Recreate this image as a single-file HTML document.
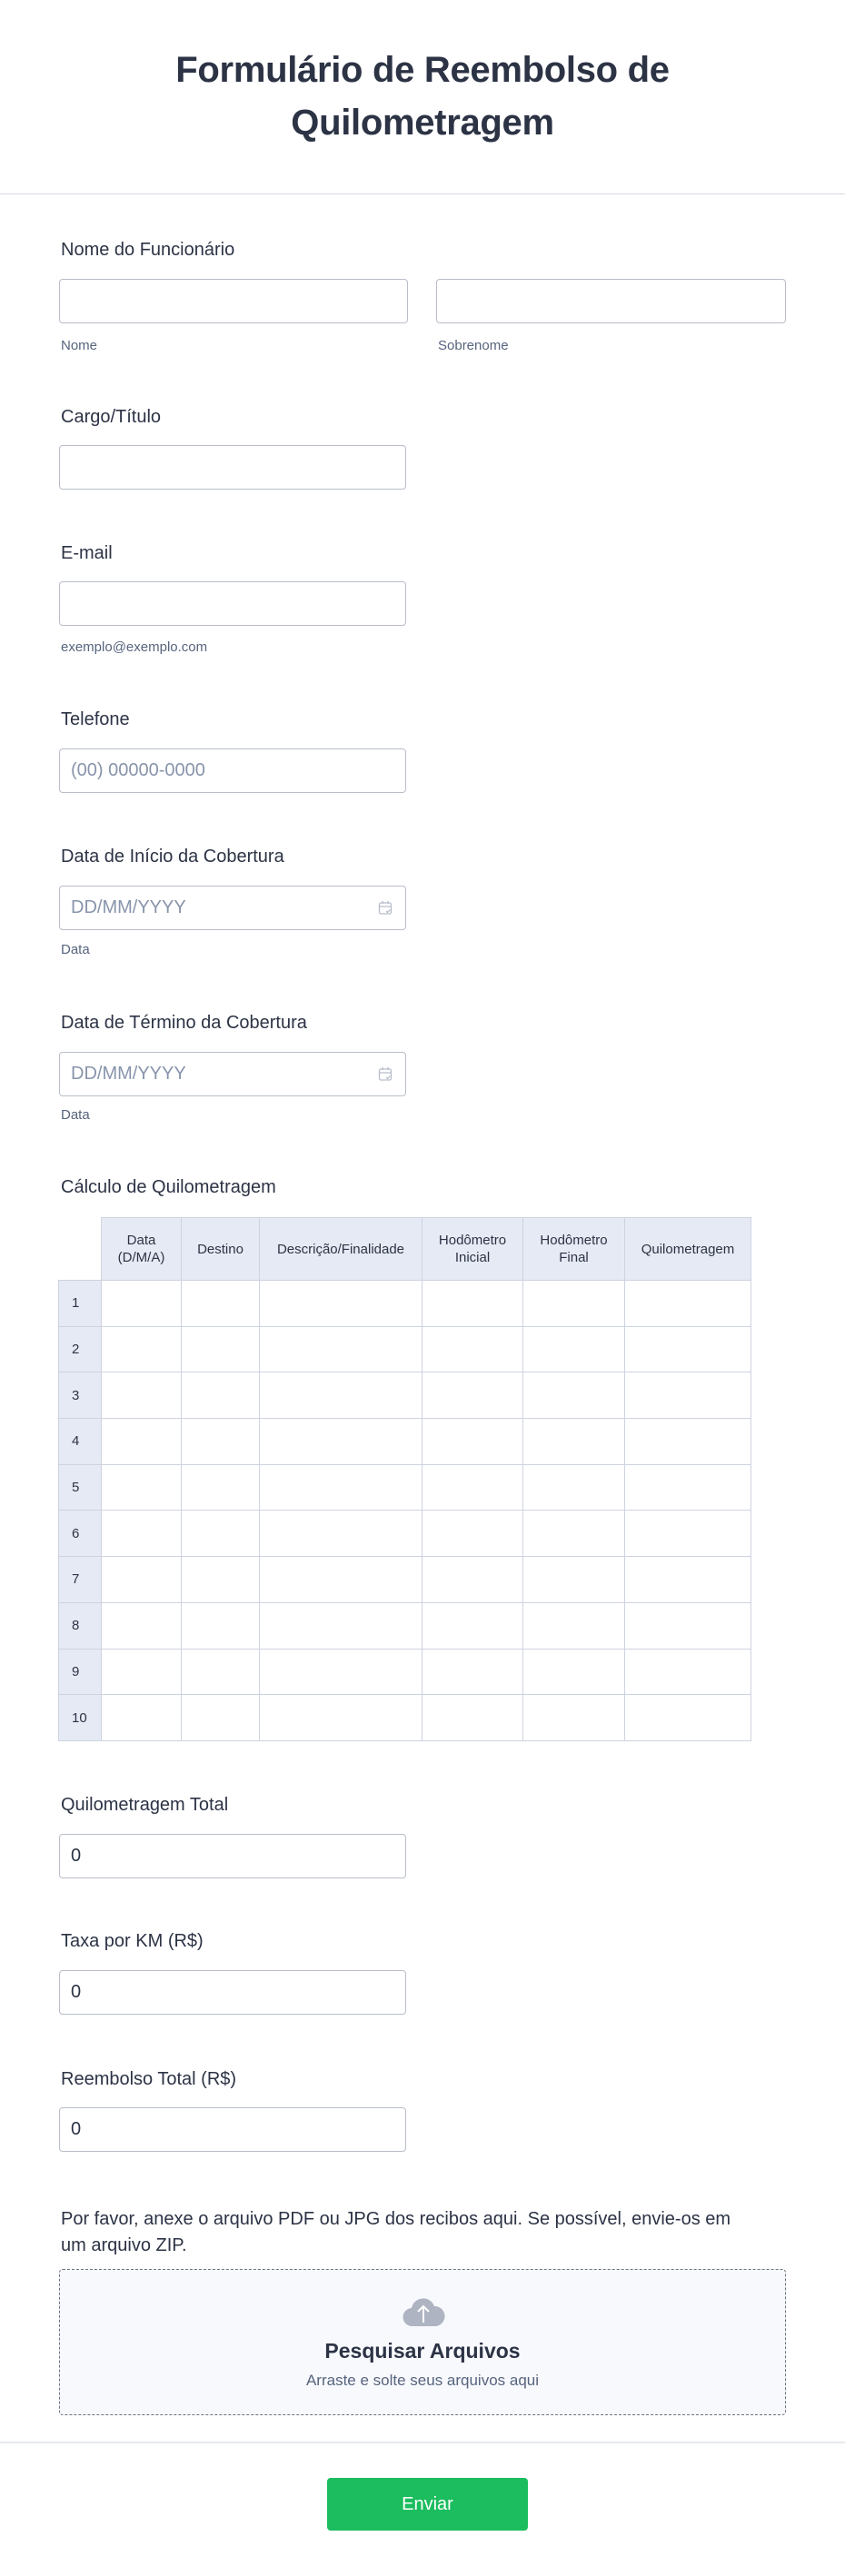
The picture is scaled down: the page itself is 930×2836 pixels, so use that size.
<!DOCTYPE html>
<html><head><meta charset="utf-8"><style>
*{box-sizing:border-box;margin:0;padding:0}
body{width:930px;height:2836px;background:#fff;font-family:"Liberation Sans",sans-serif;color:#2c3345;position:relative;overflow:hidden}
.a{position:absolute}
h1{position:absolute;left:0;width:930px;top:48px;text-align:center;font-size:40px;line-height:58px;font-weight:bold;color:#2c3345;letter-spacing:-0.3px}
.hr{position:absolute;left:0;width:930px;height:1px;background:#d8dae3}
.lbl{position:absolute;left:67px;font-size:20px;color:#2c3345}
.sub{position:absolute;font-size:15px;color:#57647e}
.in{position:absolute;border:1px solid #b8bdc9;border-radius:4px;background:#fff;height:49px;font-size:20px;color:#2c3345;padding-left:12px;line-height:47px}
.ph{color:#8894ab}
table{position:absolute;left:64px;top:1340px;border-collapse:collapse;font-size:15px}
td,th{border:1px solid #ced3e0}
th{background:#e6eaf4;font-weight:normal;height:69px;color:#2c3345;line-height:19px}
td{height:50.7px}
td.n{background:#e6eaf4;width:47px;text-align:left;padding-left:14px;font-size:15px}
th.e{background:#fff;border:none;border-right:1px solid #ced3e0;border-bottom:1px solid #ced3e0}
.up{position:absolute;left:65px;top:2498px;width:800px;height:161px;border:1px dashed #6b7280;border-radius:4px;background:#f8f9fd;text-align:center}
.btn{position:absolute;left:360px;top:2728px;width:221px;height:58px;background:#1bbd5e;border-radius:4px;color:#fff;font-size:20px;text-align:center;line-height:58px}
</style></head><body>
<h1>Formulário de Reembolso de<br>Quilometragem</h1>
<div class="hr" style="top:213px"></div>

<div class="lbl" style="top:264px">Nome do Funcionário</div>
<div class="in" style="left:65px;top:307px;width:384px"></div>
<div class="in" style="left:480px;top:307px;width:385px"></div>
<div class="sub" style="left:67px;top:372px">Nome</div>
<div class="sub" style="left:482px;top:372px">Sobrenome</div>

<div class="lbl" style="top:448px">Cargo/Título</div>
<div class="in" style="left:65px;top:490px;width:382px"></div>

<div class="lbl" style="top:598px">E-mail</div>
<div class="in" style="left:65px;top:640px;width:382px"></div>
<div class="sub" style="left:67px;top:704px">exemplo@exemplo.com</div>

<div class="lbl" style="top:781px">Telefone</div>
<div class="in ph" style="left:65px;top:824px;width:382px">(00) 00000-0000</div>

<div class="lbl" style="top:932px">Data de Início da Cobertura</div>
<div class="in ph" style="left:65px;top:975px;width:382px">DD/MM/YYYY
<svg class="a" style="right:14px;top:15px" width="16" height="17" viewBox="0 0 16 17" fill="none" stroke="#b8bdc9" stroke-width="1.3"><rect x="1.5" y="3" width="13" height="12" rx="2"/><path d="M1.5 7h13M5 1v3M11 1v3M9 12l1.5 1.5 3-3"/></svg></div>
<div class="sub" style="left:67px;top:1037px">Data</div>

<div class="lbl" style="top:1115px">Data de Término da Cobertura</div>
<div class="in ph" style="left:65px;top:1158px;width:382px">DD/MM/YYYY
<svg class="a" style="right:14px;top:15px" width="16" height="17" viewBox="0 0 16 17" fill="none" stroke="#b8bdc9" stroke-width="1.3"><rect x="1.5" y="3" width="13" height="12" rx="2"/><path d="M1.5 7h13M5 1v3M11 1v3M9 12l1.5 1.5 3-3"/></svg></div>
<div class="sub" style="left:67px;top:1219px">Data</div>

<div class="lbl" style="top:1296px">Cálculo de Quilometragem</div>
<table>
<tr><th class="e" style="width:47px"></th><th style="width:88px">Data<br>(D/M/A)</th><th style="width:86px">Destino</th><th style="width:179px">Descrição/Finalidade</th><th style="width:111px">Hodômetro<br>Inicial</th><th style="width:112px">Hodômetro<br>Final</th><th style="width:139px">Quilometragem</th></tr>
<tr><td class="n">1</td><td></td><td></td><td></td><td></td><td></td><td></td></tr>
<tr><td class="n">2</td><td></td><td></td><td></td><td></td><td></td><td></td></tr>
<tr><td class="n">3</td><td></td><td></td><td></td><td></td><td></td><td></td></tr>
<tr><td class="n">4</td><td></td><td></td><td></td><td></td><td></td><td></td></tr>
<tr><td class="n">5</td><td></td><td></td><td></td><td></td><td></td><td></td></tr>
<tr><td class="n">6</td><td></td><td></td><td></td><td></td><td></td><td></td></tr>
<tr><td class="n">7</td><td></td><td></td><td></td><td></td><td></td><td></td></tr>
<tr><td class="n">8</td><td></td><td></td><td></td><td></td><td></td><td></td></tr>
<tr><td class="n">9</td><td></td><td></td><td></td><td></td><td></td><td></td></tr>
<tr><td class="n">10</td><td></td><td></td><td></td><td></td><td></td><td></td></tr>
</table>

<div class="lbl" style="top:1976px">Quilometragem Total</div>
<div class="in" style="left:65px;top:2019px;width:382px">0</div>
<div class="lbl" style="top:2126px">Taxa por KM (R$)</div>
<div class="in" style="left:65px;top:2169px;width:382px">0</div>
<div class="lbl" style="top:2278px">Reembolso Total (R$)</div>
<div class="in" style="left:65px;top:2320px;width:382px">0</div>

<div class="lbl" style="top:2429px;line-height:29px;width:760px">Por favor, anexe o arquivo PDF ou JPG dos recibos aqui. Se possível, envie-os em<br>um arquivo ZIP.</div>
<div class="up">
<svg style="position:absolute;left:376px;top:28px" width="48" height="36" viewBox="0 0 48 36"><path d="M12 34a10 10 0 0 1-1-20A13 13 0 0 1 36 12a11 11 0 0 1 1 22z" fill="#aeb4c2"/><path d="M24 30V12M18 18l6-6 6 6" stroke="#fff" stroke-width="2" fill="none"/></svg>
<div style="position:absolute;left:0;width:100%;top:76px;font-size:23px;font-weight:bold;color:#2c3345">Pesquisar Arquivos</div>
<div style="position:absolute;left:0;width:100%;top:112px;font-size:17px;color:#57647e">Arraste e solte seus arquivos aqui</div>
</div>
<div class="hr" style="top:2688px;background:#e6e8ee;height:2px"></div>
<div class="btn">Enviar</div>
</body></html>
